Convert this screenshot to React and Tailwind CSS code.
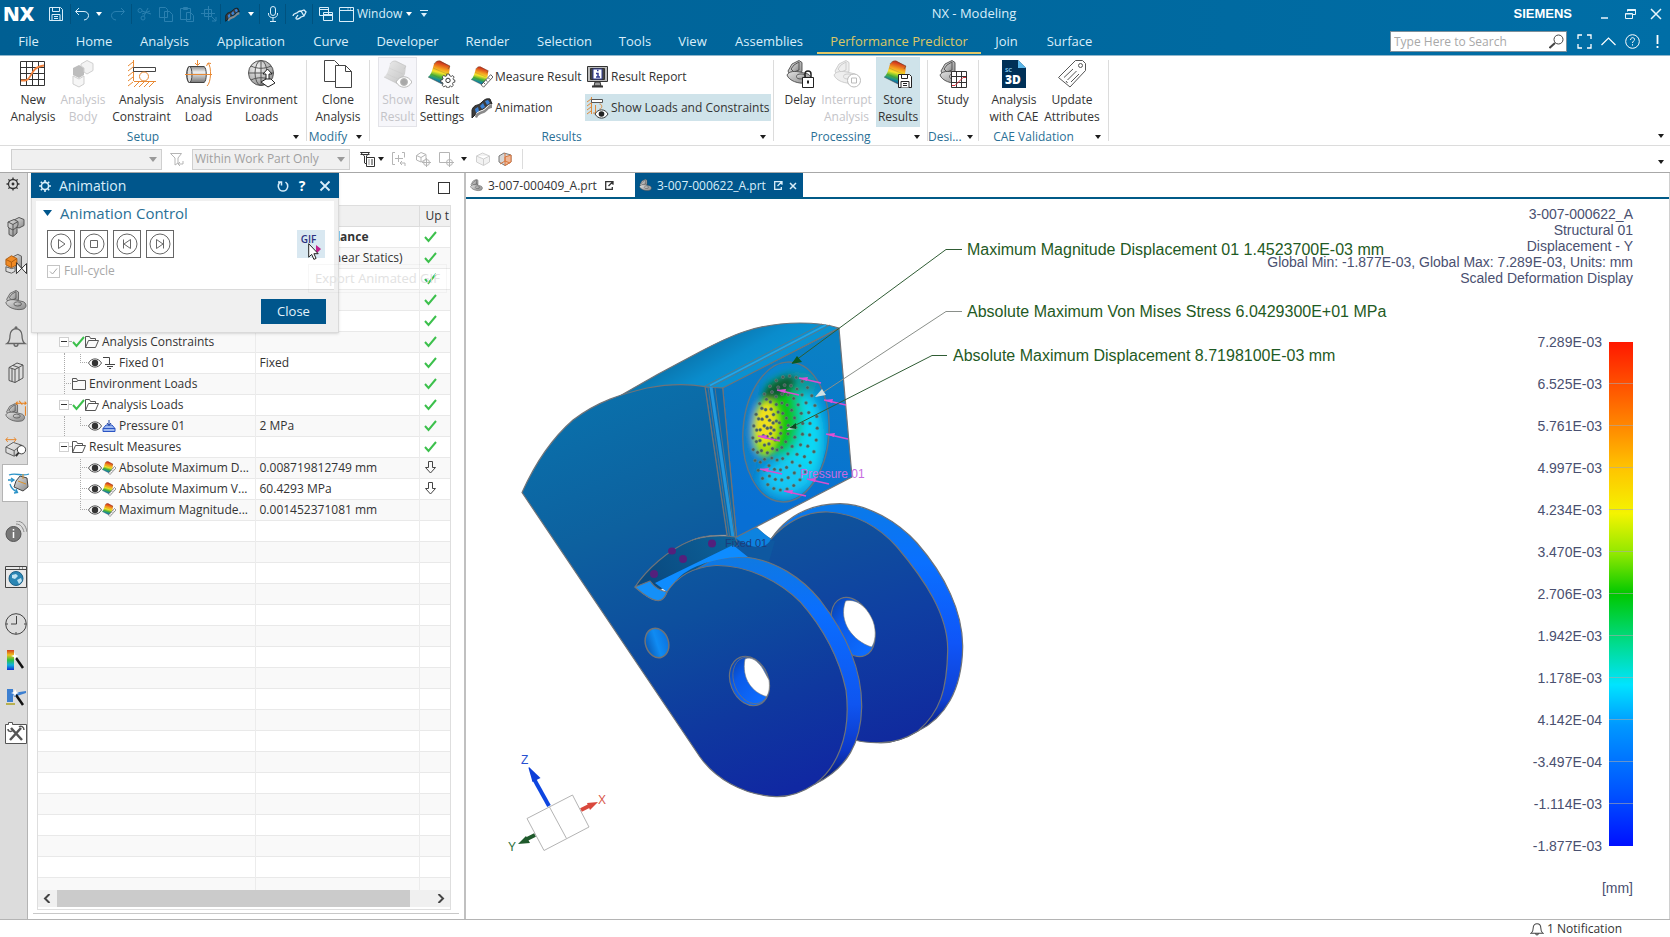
import React, { useState } from "react";
import clsx from "clsx";

const TABS = [
  { name: "File", width: "mr-[5px] w-[57px]" },
  { name: "Home", width: "w-[64px]" },
  { name: "Analysis", width: "w-[77px]" },
  { name: "Application", width: "w-[96px]" },
  { name: "Curve", width: "w-[64px]" },
  { name: "Developer", width: "w-[89px]" },
  { name: "Render", width: "w-[71px]" },
  { name: "Selection", width: "w-[83px]" },
  { name: "Tools", width: "w-[58px]" },
  { name: "View", width: "w-[57px]" },
  { name: "Assemblies", width: "w-[96px]" },
  { name: "Performance Predictor", width: "w-[164px]" },
  { name: "Join", width: "w-[51px]" },
  { name: "Surface", width: "w-[75px]" },
];

const LEGEND = [
  "7.289E-03",
  "6.525E-03",
  "5.761E-03",
  "4.997E-03",
  "4.234E-03",
  "3.470E-03",
  "2.706E-03",
  "1.942E-03",
  "1.178E-03",
  "4.142E-04",
  "-3.497E-04",
  "-1.114E-03",
  "-1.877E-03",
];

const ROWS = [
  { tail: "Balance", bold: true, state: "ok" },
  { tail: "(Linear Statics)", state: "ok" },
  { state: "ok" },
  { state: "ok" },
  { state: "ok" },
  { kind: "group", name: "Analysis Constraints", checked: true, state: "ok" },
  { kind: "leaf", name: "Fixed 01", icon: "fixed", value: "Fixed", trunk: true, last: true, state: "ok" },
  { kind: "empty", name: "Environment Loads", state: "ok" },
  { kind: "group", name: "Analysis Loads", checked: true, state: "ok" },
  { kind: "leaf", name: "Pressure 01", icon: "pressure", value: "2 MPa", trunk: true, last: true, state: "ok" },
  { kind: "group", name: "Result Measures", end: true, state: "ok" },
  { kind: "leaf", name: "Absolute Maximum D...", icon: "measure", value: "0.008719812749 mm", state: "down" },
  { kind: "leaf", name: "Absolute Maximum V...", icon: "measure", value: "60.4293 MPa", state: "down" },
  { kind: "leaf", name: "Maximum Magnitude...", icon: "measure", value: "0.001452371081 mm", last: true },
];

const FILLER_ROWS = 18;

/* ---------- shared paint ---------- */

const Defs = () => (
  <svg className="absolute h-0 w-0" aria-hidden="true">
    <defs>
      <linearGradient id="heat" x1="0.6" y1="0" x2="0.35" y2="1">
        <stop offset="0.1" stopColor="#d63a1c" />
        <stop offset="0.32" stopColor="#f39a1e" />
        <stop offset="0.5" stopColor="#f4e22a" />
        <stop offset="0.66" stopColor="#53b833" />
        <stop offset="0.82" stopColor="#158a9a" />
        <stop offset="1" stopColor="#1a3fb0" />
      </linearGradient>
      <linearGradient id="steel" x1="0" y1="0" x2="1" y2="1">
        <stop offset="0" stopColor="#e2e2e2" />
        <stop offset="1" stopColor="#8a8a8a" />
      </linearGradient>
      <linearGradient id="pale" x1="0" y1="0" x2="1" y2="1">
        <stop offset="0" stopColor="#ececec" />
        <stop offset="1" stopColor="#c4c4c4" />
      </linearGradient>
      <linearGradient id="drum" x1="0" y1="0" x2="0" y2="1">
        <stop offset="0" stopColor="#8a8a8a" />
        <stop offset="0.35" stopColor="#f0f0f0" />
        <stop offset="1" stopColor="#777777" />
      </linearGradient>
      <radialGradient id="ball" cx="0.35" cy="0.3" r="0.8">
        <stop offset="0" stopColor="#f6f6f6" />
        <stop offset="1" stopColor="#8c8c8c" />
      </radialGradient>
      <linearGradient id="rainbow" x1="0" y1="0" x2="0" y2="1">
        <stop offset="0" stopColor="#d2401c" />
        <stop offset="0.25" stopColor="#f0c020" />
        <stop offset="0.5" stopColor="#30c040" />
        <stop offset="0.75" stopColor="#10b0e0" />
        <stop offset="1" stopColor="#1030d0" />
      </linearGradient>
    </defs>
  </svg>
);

const Icon = ({ size = 28, box = 28, className, children, ...rest }) => (
  <svg
    width={size}
    height={size}
    viewBox={`0 0 ${box} ${box}`}
    fill="none"
    stroke="currentColor"
    strokeWidth="1"
    className={clsx("shrink-0", className)}
    aria-hidden="true"
    {...rest}
  >
    {children}
  </svg>
);

const Caret = ({ className = "text-[#1c1c1c]" }) => (
  <svg width="6" height="4" viewBox="0 0 6 4" fill="currentColor" className={clsx("shrink-0", className)} aria-hidden="true">
    <path d="M0 0h6L3 4z" />
  </svg>
);

const HeatBlock = ({ fill = "url(#heat)", edge = "#4a4a30" }) => (
  <>
    <path d="M6 4 9 1l3-.5L22 6l-1 8-4 7-3 3L0 17c3-2 4-6 6-13z" fill={fill} stroke="none" />
    <path d="M6 4c1-2 3-3 5-3L22 6l-2 3M0 17l14 7 3-3" stroke={edge} strokeWidth=".7" opacity=".7" />
    <path d="M5 8 19 14M3 14l13 6" stroke={edge} strokeWidth=".5" opacity=".4" />
  </>
);

const Bracket = ({ fill = "url(#steel)", edge = "#4c4c4c" }) => (
  <g stroke={edge} strokeWidth=".9" strokeLinejoin="round">
    <path d="M2 11 6 4l7-3.500 3 2v9L5 17z" fill={fill} />
    <path d="M5 9 8 5l5-3v8l-5 2z" fill={fill} />
    <path d="M1 15c2-4 8-4 13-3l8 2c5 3 3 9-3 9-6 1-16-2-18-8z" fill={fill} />
    <ellipse cx="15" cy="16.500" rx="4.500" ry="2.500" fill={fill} />
  </g>
);

const Floppy = () => (
  <g stroke="#222" fill="#fff">
    <path d="M14.500 14.500h11l2 2v11h-13z" />
    <path d="M17.500 14.500h6v4h-6zM17 27.500v-6h8v6" />
    <path d="M19 23.500h4M19 25.500h4" />
  </g>
);

/* ---------- ribbon icons ---------- */

const ribbonIcons = {
  newAnalysis: (
    <Icon className="text-[#333]">
      <path d="M1.500 1.500h24v24h-24zM7.500 1.500v24M13.500 1.500v24M19.500 1.500v24M1.500 7.500h24M1.500 13.500h24M1.500 19.500h24" />
      <path d="M2 20.500h4c7 0 5-14 19-15" stroke="#f0803c" strokeWidth="1.800" />
    </Icon>
  ),
  body: (
    <Icon className="text-[#cfcfcf]">
      <path d="M4 8 10 5l5 3v7l-5 3-6-3z" fill="#bdbdbd" stroke="none" />
      <path d="M12 4 18 .5l6 3v7L18 14l-3-2V8l-3-2z" fill="#f3f3f3" />
      <path d="M4 16v8l6 3 5-3v-8l-5 3z" fill="#f6f6f6" />
    </Icon>
  ),
  constraint: (
    <Icon className="text-[#e88a35]">
      <path d="M5.500 0v21M5 2 0 6M5 7l-5 4M5 12l-5 4M5 17l-5 4M5 22l-5 4" />
      <path d="M5.500 7.500h22v4h-22z" stroke="#444" fill="#fff" />
      <circle cx="16" cy="16.500" r="4.500" />
      <path d="M6 21.500h22M11 22l-5 5M16 22l-5 5M21 22l-5 5M26 22l-5 5" />
    </Icon>
  ),
  load: (
    <Icon className="text-[#e88a35]">
      <path d="M4 6.500h15c3 1 3 15 0 16H4c-3-1-3-15 0-16z" fill="url(#drum)" stroke="#444" />
      <ellipse cx="4.500" cy="14.500" rx="2.500" ry="8" fill="#ddd" stroke="#444" />
      <path d="M0 14.500h27M12.500 0v5M10 3l2.500 2.500L15 3M22 26c4-3 5-19 1-23M26 3.500 23 3l-1.500 3" />
    </Icon>
  ),
  environment: (
    <Icon className="text-[#555]">
      <circle cx="13" cy="13" r="12.500" fill="url(#ball)" />
      <ellipse cx="13" cy="13" rx="6" ry="12.500" />
      <path d="M.500 13h25M13 .500v25M3 6c6 3 14 3 20 0M3 20c6-3 14-3 20 0" />
      <path d="M18 19v-5h-3l4.500-5 4.500 5h-3v5M13 22l5-3h5l4 4-7 4z" fill="#fff" stroke="#222" />
    </Icon>
  ),
  clone: (
    <Icon className="text-[#444]">
      <path d="M.500.500h10l5 5v16H.500z" fill="#fff" />
      <path d="M11.500 5.500h10l6 6v16h-16z" fill="#fff" />
      <path d="M21.500 5.500v6h6" />
    </Icon>
  ),
  showResult: (
    <Icon className="text-[#b8b8b8]">
      <HeatBlock fill="url(#pale)" edge="#bbb" />
      <path d="M12 22c4-7 12-7 16 0-4 7-12 7-16 0z" fill="#fff" />
      <circle cx="20" cy="22" r="3.500" fill="#a8a8a8" />
    </Icon>
  ),
  resultSettings: (
    <Icon className="text-[#333]">
      <HeatBlock />
      <g transform="translate(20 20)">
        <path d="M-1.500-7h3l.5 2 1.800.8 1.800-1L7.200-3.500 6-1.500l.5 1.200 1.500.3v2.500l-2 .4-.7 1.600 1 1.800L4.500 8l-1.700-1-1.300.5-.5 2h-2l-.6-2L-3.200 7-5 8l-1.800-1.700 1-1.800-.7-1.600-2-.4V0l2-.4.700-1.400-1-1.900L-5-5.300l1.800 1 1.700-.7z" fill="#fff" transform="scale(.85)" />
        <circle r="2.200" cy=".4" />
      </g>
    </Icon>
  ),
  delay: (
    <Icon>
      <Bracket />
      <path d="M19 18v-4c0-4 6-4 6 0v4" stroke="#222" strokeWidth="1.500" />
      <path d="M16.500 17.500h11v10h-11z" stroke="#222" fill="#fff" />
      <path d="M22 20.500v3" stroke="#222" strokeWidth="2" />
    </Icon>
  ),
  interrupt: (
    <Icon>
      <Bracket fill="#eee" edge="#c9c9c9" />
      <circle cx="21" cy="20.500" r="6.500" fill="#fff" stroke="#bbb" />
      <path d="M18.500 18h5v5h-5z" stroke="#bbb" />
    </Icon>
  ),
  store: (
    <Icon>
      <HeatBlock />
      <Floppy />
    </Icon>
  ),
  study: (
    <Icon>
      <Bracket />
      <path d="M12.500 11.500h15v16h-15zM17.500 11.500v16M22.500 11.500v16M12.500 16.500h15M12.500 22.500h15" stroke="#333" fill="#fff" />
      <path d="M13 25.500h3l8-8h3" stroke="#d8303c" />
    </Icon>
  ),
  cae: (
    <Icon>
      <path d="M2 0h16l8 8v20H2z" fill="#003057" stroke="none" />
      <path d="M18 0v8h8z" fill="#59b5e8" stroke="none" />
      <text x="5" y="12" fontSize="6" fontWeight="700" fill="#7fc4ea" stroke="none">SC</text>
      <text x="5" y="24" fontSize="12" fontWeight="800" fill="#fff" stroke="none">3D</text>
    </Icon>
  ),
  tag: (
    <Icon className="text-[#555]">
      <path d="M.500 17.500 17.500.500h7l3 3v7L12 27z" fill="#fff" />
      <circle cx="22.500" cy="5.500" r="2" />
      <path d="M6 17.500 15 9M9.500 20 18.500 11M8 21l1.500 2M13 22l8-8" />
    </Icon>
  ),
};

const MeasureIcon = ({ size = 22 }) => (
  <Icon size={size} box={28}>
    <HeatBlock />
    <path d="m13 24 12-13 3 3-12 13z" fill="#fff" stroke="#333" />
    <path d="m16 21 2 2m1-5 2 2m1-5 2 2" stroke="#333" />
  </Icon>
);

const FilmIcon = ({ size = 22, edge = "#222" }) => (
  <Icon size={size} box={22}>
    <path d="M1 13C3 7 7 9 10 6s5-5 9-4l2 5c-4-1-5 3-9 5s-6 1-8 6l-3 3z" fill="#3c3c3c" stroke={edge} />
    <path d="m4 12 3-2 1 4-3 2zM9 9l3-3 2 4-3 2zM14 4l3-1 2 3-3 2z" fill="#3b82d6" stroke="none" />
    <path d="M4 20c1-5 5-5 9-7s4-6 8-5v3c-4 0-5 4-8 5s-6 2-7 5z" fill="#8a8a8a" stroke="none" />
  </Icon>
);

const ReportIcon = () => (
  <Icon size={22} box={22} className="text-[#333]">
    <path d="M.500.500h20v15h-20z" fill="#bdbdbd" />
    <path d="M3.500 2.500h14v11h-14z" fill="#444" />
    <path d="M6 3h9v10H6z" fill="#fff" stroke="#303a90" />
    <path d="M9 7.500h2V11m-2 0h4" stroke="#303a90" strokeWidth="1.500" />
    <path d="M10 4.500h1.500" stroke="#303a90" strokeWidth="1.500" />
    <path d="M8 16h5l1 4H7z" fill="#999" />
    <path d="M5 20.500h11" strokeWidth="2" />
  </Icon>
);

const LoadsEyeIcon = () => (
  <Icon size={22} box={22} className="text-[#e08a3a]">
    <path d="M4.500 0v17M4 2 0 5M4 6 0 9M4 10l-4 3M4 14l-4 3" />
    <path d="M4.500 2.500h11v3h-11z" stroke="#555" fill="#fff" />
    <path d="M8.500 8v8M12.500 7c3 0 3 5 0 5M6 16h5" />
    <path d="M8 17c3-5.500 10-5.500 13 0-3 5.500-10 5.500-13 0z" fill="#fff" stroke="#333" />
    <circle cx="14.500" cy="17" r="2.800" fill="#222" stroke="none" />
  </Icon>
);

/* ---------- title bar ---------- */

const QuickButton = ({ label, className, children }) => (
  <button type="button" aria-label={label} className={clsx("flex h-6 items-center justify-center", className)}>
    {children}
  </button>
);

const Divider = () => <span className="h-5 w-px bg-[#00527f]" />;

const QuickAccess = () => (
  <div className="flex h-[28px] items-center text-[#d9eefa]">
    <span className="w-[42px] pl-[3px] text-[20px] leading-7 font-extrabold text-white">NX</span>
    <QuickButton label="Save" className="w-[28px]">
      <Icon size={16} box={16}>
        <path d="M1.500 1.500h11l2 2v11h-13zM4.500 1.500v4h7v-4M4 14.500v-6h8v6M6 10.500h4M6 12.500h4" />
      </Icon>
    </QuickButton>
    <Divider />
    <QuickButton label="Undo" className="w-[22px]">
      <Icon size={16} box={16}>
        <path d="M5 2 1.500 5.500 5 9M2 5.500h8c6 0 6 8 0 8.500" />
      </Icon>
    </QuickButton>
    <QuickButton label="Undo list" className="w-[12px]">
      <Caret className="text-white" />
    </QuickButton>
    <QuickButton label="Redo" className="w-[26px] text-[#2a80b0]">
      <Icon size={16} box={16}>
        <path d="M11 2l3.500 3.500L11 9M14 5.500H6c-6 0-6 8 0 8.500" />
      </Icon>
    </QuickButton>
    <Divider />
    <QuickButton label="Cut" className="w-[24px] text-[#2a80b0]">
      <Icon size={14} box={14}>
        <circle cx="3" cy="3.500" r="2" />
        <circle cx="6" cy="11" r="2" />
        <path d="m5 4 9 3M7 9l4-8M13 4 5 7" />
      </Icon>
    </QuickButton>
    <QuickButton label="Copy" className="w-[20px] text-[#2a80b0]">
      <Icon size={16} box={16}>
        <path d="M1.500 1.500h6l2 2v8h-8zM6.500 5.500h5l3 3v7h-8z" />
      </Icon>
    </QuickButton>
    <QuickButton label="Paste" className="w-[22px] text-[#2a80b0]">
      <Icon size={16} box={16}>
        <path d="M1.500 2.500h10v11h-10zM4.500 1.500h4v2h-4zM7.500 6.500h4l3 3v6h-7z" />
      </Icon>
    </QuickButton>
    <QuickButton label="Move" className="w-[22px] text-[#2a80b0]">
      <Icon size={16} box={16}>
        <path d="M3.500 3.500h7v7h-7zM7.500 0v14M0 7.500h14M10 10l5 5m0-4v4h-4" />
      </Icon>
    </QuickButton>
    <Divider />
    <QuickButton label="Animate" className="w-[22px]">
      <FilmIcon size={15} edge="#111" />
    </QuickButton>
    <QuickButton label="Animate list" className="w-[16px]">
      <Caret className="text-white" />
    </QuickButton>
    <Divider />
    <QuickButton label="Voice" className="w-[25px]">
      <Icon size={16} box={16}>
        <rect x="5.500" y=".5" width="5" height="9" rx="2.500" />
        <path d="M3.500 7v1c0 5 9 5 9 0V7M8 12v3M5 15.500h6" />
      </Icon>
    </QuickButton>
    <Divider />
    <QuickButton label="Touch mode" className="w-[26px]">
      <Icon size={15} box={15} strokeWidth="1.300">
        <path d="M1 9c0-3 4-2 5-4 1-1 2-1 3-1l3-1 2 2-2 4-3 1c-2 2-5 3-5 1l2-3M9 4l3 5" />
      </Icon>
    </QuickButton>
    <Divider />
    <QuickButton label="Switch window" className="w-[26px]">
      <Icon size={16} box={16}>
        <path d="M1.500 1.500h9v8h-9zM1.500 3.500h9M5.500 6.500h9v8h-9z" />
        <path d="M5.500 9h9" strokeWidth="2" />
      </Icon>
    </QuickButton>
    <QuickButton label="Window" className="gap-[3px] text-[12px]">
      <Icon size={15} box={15}>
        <path d="M.500.500h14v14H.500zM.500 3.500h14M8.500 2h1M11 2h1" />
      </Icon>
      Window
      <Caret className="ml-px text-white" />
    </QuickButton>
    <QuickButton label="Customize" className="ml-[8px]">
      <svg width="8" height="8" viewBox="0 0 8 8" fill="currentColor" aria-hidden="true">
        <path d="M0 0h8v1H0zM1 3h6L4 7z" />
      </svg>
    </QuickButton>
  </div>
);

const TitleBar = ({ active, onSelect }) => (
  <header className="h-[56px] shrink-0 border-b border-[#8fb6cc] bg-linear-to-r from-[#005f93] to-[#006ea6] text-white">
    <div className="grid h-[28px] grid-cols-[1fr_auto_1fr] items-center pr-[8px]">
      <QuickAccess />
      <h1 className="ml-[286px] text-[13px] text-[#d9eefa]">NX - Modeling</h1>
      <div className="flex items-center justify-end text-[#e8f5fc]">
        <span className="mr-[26px] font-['Arimo','Liberation_Sans',sans-serif] text-[13px] font-bold text-white">SIEMENS</span>
        <button type="button" aria-label="Minimize" className="mr-[14px]">
          <Icon size={12} box={12} strokeWidth="1.500"><path d="M3 10h7" /></Icon>
        </button>
        <button type="button" aria-label="Restore" className="mr-[14px]">
          <Icon size={12} box={12}>
            <path d="M3.500 3.500v-2h8v5h-3" /><path d="M3.500 2h8" strokeWidth="2" />
            <path d="M1.500 5.500h7v5h-7zM1.500 6h7" />
          </Icon>
        </button>
        <button type="button" aria-label="Close window">
          <Icon size={12} box={12} strokeWidth="1.500"><path d="m1 1 10 10M11 1 1 11" /></Icon>
        </button>
      </div>
    </div>
    <div className="flex h-[27px] items-center">
      <nav className="flex h-full text-[13px] text-[#d9eefa]">
        {TABS.map((tab) => (
          <button
            key={tab.name}
            type="button"
            onClick={() => onSelect(tab.name)}
            className={clsx(
              "h-[26px] border-b-2 pt-[3px] whitespace-nowrap",
              tab.width,
              active === tab.name ? "border-[#e3c767] text-[#dcc766]" : "border-transparent"
            )}
          >
            {tab.name}
          </button>
        ))}
      </nav>
      <div className="ml-auto flex items-center pr-[5px]">
        <label className="mr-[10px] flex h-[21px] w-[177px] items-center border border-[#7d8f9a] bg-white pr-[2px] text-[#444]">
          <input
            type="search"
            aria-label="Search commands"
            placeholder="Type Here to Search"
            className="w-full min-w-0 bg-transparent px-[3px] text-[12px] text-[#333] outline-none placeholder:text-[#a8a8a8]"
          />
          <Icon size={15} box={15}>
            <circle cx="9.500" cy="5.500" r="4.500" />
            <path d="M6 9 .500 14" strokeWidth="2" />
          </Icon>
        </label>
        <button type="button" aria-label="Full screen" className="mr-[9px]">
          <Icon size={15} box={15} strokeWidth="1.300"><path d="M1 5V1h4M10 1h4v4M14 10v4h-4M5 14H1v-4" /></Icon>
        </button>
        <button type="button" aria-label="Collapse ribbon" className="mr-[9px]">
          <Icon size={15} box={15} strokeWidth="1.200"><path d="m.500 11 7-7 7 7" /></Icon>
        </button>
        <button type="button" aria-label="Help" className="mr-[10px]">
          <Icon size={15} box={15}>
            <circle cx="7.500" cy="7.500" r="6.800" />
            <path d="M5.500 6c0-3 4-3 4-.5 0 1.800-2 1.500-2 3.500M7.500 10.200v1.300" />
          </Icon>
        </button>
        <button type="button" aria-label="Alerts">
          <Icon size={15} box={15} strokeWidth="1.800"><path d="M7.500 1v9M7.500 12v2" /></Icon>
        </button>
      </div>
    </div>
  </header>
);

/* ---------- ribbon ---------- */

const BigButton = ({ icon, lines, width, disabled, pressed, outlined }) => (
  <button
    type="button"
    disabled={disabled}
    className={clsx(
      "flex h-[70px] shrink-0 flex-col items-center border pt-[2px] text-[12px] leading-[17px]",
      width,
      pressed ? "border-[#cde2ea] bg-[#cfe3ea]" : outlined ? "border-[#e3e3e8] bg-[#f6f6fa]" : "border-transparent",
      disabled ? "text-[#c4c4c8]" : "text-[#333]"
    )}
  >
    {ribbonIcons[icon]}
    <span className="mt-[3px] whitespace-nowrap">{lines[0]}</span>
    <span className="whitespace-nowrap">{lines[1]}</span>
  </button>
);

const SmallButton = ({ icon, label, pressed, className }) => (
  <button
    type="button"
    className={clsx(
      "flex h-[27px] items-center gap-[2px] text-[12px] whitespace-nowrap text-[#333]",
      pressed && "bg-[#cfe3ea]",
      className
    )}
  >
    {icon}
    {label}
  </button>
);

const RibbonGroup = ({ title, width, className, children }) => (
  <section className={clsx("my-1 flex shrink-0 flex-col border-r border-[#dcdcdc]", width)}>
    <div className={clsx("-mt-[3px] flex h-[70px]", className)}>{children}</div>
    <div className="mt-[1px] flex h-[18px] items-center text-[12px] text-[#2a7096]">
      <span className="flex-1 text-center whitespace-nowrap">{title}</span>
      <button type="button" aria-label={`${title} options`} className="flex w-[20px] justify-center">
        <Caret />
      </button>
    </div>
  </section>
);

const Ribbon = () => (
  <div className="flex h-[90px] shrink-0 border-b border-[#dcdcdc] bg-white">
    <RibbonGroup title="Setup" width="w-[307px]" className="pl-[8px]">
      <BigButton icon="newAnalysis" lines={["New", "Analysis"]} width="w-[50px]" />
      <BigButton icon="body" lines={["Analysis", "Body"]} width="w-[50px]" disabled />
      <BigButton icon="constraint" lines={["Analysis", "Constraint"]} width="w-[67px]" />
      <BigButton icon="load" lines={["Analysis", "Load"]} width="w-[47px]" />
      <BigButton icon="environment" lines={["Environment", "Loads"]} width="w-[79px]" />
    </RibbonGroup>
    <RibbonGroup title="Modify" width="w-[63px]" className="justify-center">
      <BigButton icon="clone" lines={["Clone", "Analysis"]} width="w-[50px]" />
    </RibbonGroup>
    <RibbonGroup title="Results" width="w-[404px]" className="pl-[8px]">
      <BigButton icon="showResult" lines={["Show", "Result"]} width="w-[39px]" disabled outlined />
      <BigButton icon="resultSettings" lines={["Result", "Settings"]} width="w-[50px]" />
      <div className="flex w-[118px] flex-col gap-[4px] pt-[6px] pl-[4px]">
        <SmallButton icon={<MeasureIcon />} label="Measure Result" />
        <SmallButton icon={<FilmIcon />} label="Animation" />
      </div>
      <div className="flex w-[186px] flex-col gap-[4px] pt-[6px]">
        <SmallButton icon={<ReportIcon />} label="Result Report" className="pl-[2px]" />
        <SmallButton icon={<LoadsEyeIcon />} label="Show Loads and Constraints" className="pl-[2px]" pressed />
      </div>
    </RibbonGroup>
    <RibbonGroup title="Processing" width="w-[154px]" className="pl-[3px]">
      <BigButton icon="delay" lines={["Delay", ""]} width="w-[46px]" />
      <BigButton icon="interrupt" lines={["Interrupt", "Analysis"]} width="w-[47px]" disabled />
      <span className="w-[6px]" />
      <BigButton icon="store" lines={["Store", "Results"]} width="w-[44px]" pressed />
    </RibbonGroup>
    <RibbonGroup title="Desi..." width="w-[51px]" className="justify-center">
      <BigButton icon="study" lines={["Study", ""]} width="w-[46px]" />
    </RibbonGroup>
    <RibbonGroup title="CAE Validation" width="w-[130px]" className="pl-[5px]">
      <BigButton icon="cae" lines={["Analysis", "with CAE"]} width="w-[60px]" />
      <BigButton icon="tag" lines={["Update", "Attributes"]} width="w-[56px]" />
    </RibbonGroup>
    <button type="button" aria-label="Ribbon options" className="mt-auto mr-[6px] mb-[7px] ml-auto">
      <Caret />
    </button>
  </div>
);

/* ---------- selection bar ---------- */

const FilterSelect = ({ label, options, className }) => (
  <div className={clsx("relative", className)}>
    <select
      aria-label={label}
      disabled
      className="block h-[21px] w-full appearance-none border border-[#cfcfcf] bg-[#f0f0f0] pl-[2px] text-[12px] text-[#a0a0a0] opacity-100"
    >
      {options.map((option) => (
        <option key={option}>{option}</option>
      ))}
    </select>
    <svg width="8" height="5" viewBox="0 0 8 5" className="absolute top-[8px] right-[5px] fill-[#9a9a9a]" aria-hidden="true">
      <path d="M0 0h8L4 5z" />
    </svg>
  </div>
);

const SelectionBar = () => (
  <div className="flex h-[27px] shrink-0 items-center border-b border-[#a8a8a8] bg-white pl-[11px] text-[#b5b5b5]">
    <FilterSelect label="Type filter" options={[""]} className="w-[151px]" />
    <Icon size={15} box={15} className="mr-[7px] ml-[8px]">
      <path d="M.500 1.500h11L8 6v5l-3 2V6zM10 10l-2 2 2 2M8 12h5V9" />
    </Icon>
    <FilterSelect label="Selection scope" options={["Within Work Part Only"]} className="w-[158px]" />
    <Icon size={15} box={15} className="mr-[3px] ml-[10px] text-[#333]">
      <path d="M.500.500h9L6.500 4v8l-2-1V4zM.500 2.500h9" />
      <path d="M6.500 5.500h8v9h-8zM8.500 8h1M11 8h2M8.500 10h1M11 10h2M8.500 12h1M11 12h2" fill="#fff" />
    </Icon>
    <Caret />
    <Icon size={15} box={15} className="ml-[8px]">
      <path d="M3 .500H.500v12H3M10 .500h2.500v5M3 6.500h8M6.500 3v7M10 9l-2 2 2 2M8 11h5v3" />
    </Icon>
    <Icon size={15} box={15} className="ml-[9px]">
      <path d="M.500 3.500 5 .500l5 2v5L5 10 .500 8zM.500 3.500l4.500 2 5-3M5 5.500V10" />
      <circle cx="10.500" cy="10.500" r="3" fill="#fff" />
      <path d="M10.500 6v9M6 10.500h9" />
    </Icon>
    <Icon size={15} box={15} className="ml-[8px]">
      <path d="M.500.500h10v10H.500z" />
      <circle cx="10.500" cy="10.500" r="3" fill="#fff" />
      <path d="M10.500 6v9M6 10.500h9" />
    </Icon>
    <span className="ml-[7px] flex"><Caret /></span>
    <Icon size={14} box={14} className="ml-[9px] text-[#d0d0d0]">
      <path d="m.500 4 6-3 7 3v6l-6 3.500-7-3.500zM.500 4l7 3 6-3M7.500 7v6.500" fill="#f2f2f2" />
    </Icon>
    <Icon size={14} box={14} className="ml-[8px] text-[#777]">
      <path d="m1 4 5-3 7 2v7l-6 3.500L1 10z" fill="#d6d6d6" />
      <path d="m7 5 6-2v7l-6 3.500z" fill="#efb897" stroke="#d9773f" />
      <path d="M7 1v8l-5 3M7 9l5 2" stroke="#d9773f" />
    </Icon>
    <span className="ml-[10px] h-5 w-px bg-[#dcdcdc]" />
    <button type="button" aria-label="Selection bar options" className="mt-[6px] mr-[6px] ml-auto flex">
      <Caret />
    </button>
  </div>
);

/* ---------- resource bar ---------- */

const RESOURCES = [
  {
    name: "Settings",
    height: "h-[22px]",
    icon: (
      <Icon size={14} box={14} className="text-[#333]" strokeWidth="1.300">
        <circle cx="7" cy="7" r="4.500" />
        <circle cx="7" cy="7" r=".8" fill="currentColor" />
        <path d="M7 .5v2M7 11.500v2M.500 7h2M11.500 7h2M2.400 2.400l1.400 1.400M10.200 10.200l1.400 1.400M2.400 11.600l1.400-1.400M10.200 3.800l1.400-1.400" />
      </Icon>
    ),
  },
  {
    name: "Assembly navigator",
    height: "mt-[14px] h-[36px]",
    icon: (
      <Icon size={22} box={22} className="text-[#555]">
        <path d="M9 4 14 1.500l5 2v6L14 12l-5-2z" fill="url(#steel)" />
        <path d="M3 6 9 3.500l4 2V9l-1 2v6l-4 3.500-4-2V12l-1-1z" fill="url(#steel)" />
        <path d="m3 6 5 2.500L13 5.500M4 12l4 2 4-3M8 8.500V20" />
      </Icon>
    ),
  },
  {
    name: "Constraint navigator",
    height: "h-[37px]",
    icon: (
      <Icon size={22} box={24} className="text-[#555]">
        <path d="m9 4 5-2.500 4 2V16l-5 3z" fill="url(#steel)" />
        <path d="m1 7 6-4 6 3v7l-6 3-6-3z" fill="#f08a24" stroke="#a85a10" />
        <path d="m1 7 6 3 6-4M7 10v6" stroke="#a85a10" />
        <path d="m1 15 6 2 4-1v4l-4 2-6-2z" fill="#ddd" />
        <path d="M12.500 10.500v12l11-11v11z" fill="#fff" stroke="#222" />
      </Icon>
    ),
  },
  {
    name: "Part navigator",
    height: "h-[37px]",
    icon: <Icon size={22} box={26}><Bracket /></Icon>,
  },
  {
    name: "Notifications",
    height: "h-[36px]",
    icon: (
      <Icon size={22} box={22} className="text-[#666]" strokeWidth="1.300">
        <path d="M2 17.500c3-2 3-5 3-8 0-9 12-9 12 0 0 3 0 6 3 8zM9 18c0 3 4 3 4 0M10 2.500c0-2 2-2 2 0" />
      </Icon>
    ),
  },
  {
    name: "Reuse library",
    height: "h-[36px]",
    icon: (
      <Icon size={22} box={22} className="text-[#555]">
        <path d="M4 5.500 12 1l6 2v13l-8 4.500-6-2z" fill="#ddd" />
        <path d="m4 5.500 6 2L18 3M10 7.500v13M7 6.500v13M8 3.500l6 2v13" />
      </Icon>
    ),
  },
  {
    name: "PMI navigator",
    height: "h-[39px]",
    icon: (
      <Icon size={22} box={28} className="text-[#e8801c]" strokeWidth="1.300">
        <g transform="translate(0 4)"><Bracket /></g>
        <path d="M14 4h13M16 2l-2 2 2 2M25 2l2 2-2 2M26 8v12M18 1l4 5" />
      </Icon>
    ),
  },
  {
    name: "Inspection",
    height: "h-[34px]",
    icon: (
      <Icon size={22} box={24} className="text-[#555]">
        <path d="m1 12 8-5 9 3v6l-8 6-9-4z" fill="url(#pale)" />
        <path d="m1 12 9 4 8-6M10 16v6" />
        <circle cx="18" cy="15" r="4.500" fill="#fff" stroke="#333" />
        <path d="m15 18-3 4" stroke="#333" strokeWidth="2" />
        <path d="M1 4h11M3 1.500 1 4l2 2.500M10 1.500 12 4l-2 2.500" stroke="#e8801c" />
      </Icon>
    ),
  },
  {
    name: "Performance predictor",
    height: "h-[38px]",
    icon: (
      <Icon size={22} box={22} className="text-[#2b93c8]">
        <path d="M1 3c7-3 12 2 20-1M0 8h5M3 6l3 2-3 2M2 12c1 4 3 6 7 8M8 17l1.500 3.500L6 21" strokeWidth="1.300" />
        <path d="M8 9 12 4l7 2 1 9-5 4-9-4z" fill="url(#steel)" stroke="#444" />
        <path d="m10 9 8 3M15 2v5" stroke="#d8902c" />
      </Icon>
    ),
  },
  {
    name: "Information",
    height: "h-[60px]",
    icon: (
      <Icon size={22} box={22} className="text-[#888]">
        <circle cx="8.500" cy="13" r="7.500" fill="#777" stroke="#555" />
        <path d="M8.500 11v6M8.500 8v1.500" stroke="#fff" strokeWidth="1.500" />
        <path d="M11 3c5 0 7 4 8 8M11 0c7 0 10 5 11 11" />
      </Icon>
    ),
  },
  {
    name: "Web browser",
    height: "h-[30px]",
    icon: (
      <Icon size={22} box={22} className="text-[#444]">
        <path d="M.500.500h21v21H.500z" fill="#e8e8e8" />
        <path d="M.500 3.500h21M14 2h1M17 2h1" />
        <circle cx="11" cy="12.500" r="7" fill="#2a86b4" stroke="#1b6189" />
        <path d="M7 9l4-1 2 2-3 3-3-1zM12 14l4-2 1 3-3 3zM8 16l2 1" fill="#bfe3f2" stroke="none" />
      </Icon>
    ),
  },
  {
    name: "History",
    height: "mt-[14px] h-[36px]",
    icon: (
      <Icon size={22} box={22} className="text-[#444]">
        <circle cx="11" cy="11" r="10.300" />
        <path d="M11.500 3v8H6M11 19v2M19 11h2M1 11h2" />
      </Icon>
    ),
  },
  {
    name: "System materials",
    height: "h-[36px]",
    icon: (
      <Icon size={22} box={22}>
        <path d="M2 1h7v20H2z" fill="url(#rainbow)" stroke="none" />
        <path d="m11 9 7 10" stroke="#111" strokeWidth="2.500" />
        <path d="M9 3l1.500 3L14 7l-3 1-1 3-1-3-3-1 3-1z" fill="#fff" stroke="none" />
      </Icon>
    ),
  },
  {
    name: "Process studio",
    height: "h-[38px]",
    icon: (
      <Icon size={22} box={22}>
        <path d="M2 3h6v13H2zM8 7l13-2v2l-12 4z" fill="#3c7fd0" stroke="none" />
        <path d="M1 17h9v2H1z" fill="#b8b050" stroke="none" />
        <path d="m11 9 7 10" stroke="#111" strokeWidth="2.500" />
        <path d="M10 3l1.500 3L14 7l-3 1-1 3-1-3-3-1 3-1z" fill="#fff" stroke="none" />
      </Icon>
    ),
  },
  {
    name: "Tools",
    height: "h-[34px]",
    icon: (
      <Icon size={22} box={22} className="text-[#555]">
        <path d="M.500 2.500h3v-2h4v2h14v19H.500z" fill="#fff" />
        <path d="M6 6l11 12M16 6 5 18" strokeWidth="2.500" />
        <path d="M3 7c0 3 4 3 5 1M14 5c2-2 5 0 5 3" strokeWidth="1.500" />
      </Icon>
    ),
  },
];

const ResourceBar = () => (
  <nav className="flex w-[28px] shrink-0 flex-col border-r border-[#b4b4b4] bg-[#dcdcdc]">
    {RESOURCES.map(({ name, height, icon }) => (
      <button
        key={name}
        type="button"
        aria-label={name}
        className={clsx(
          "flex shrink-0 items-center",
          height,
          name === "Settings" ? "pl-[6px]" : "pl-[5px]",
          name === "Performance predictor" && "-mr-px ml-[2px] border border-r-0 border-[#b4b4b4] bg-white pl-[2px]"
        )}
      >
        {icon}
      </button>
    ))}
  </nav>
);

/* ---------- navigator tree ---------- */

const Check = () => (
  <Icon size={13} box={13} className="text-[#3cc04c]" strokeWidth="2">
    <path d="m1 7 3.500 4L12 2" />
  </Icon>
);

const Folder = () => (
  <Icon size={14} box={14} className="text-[#555]">
    <path d="M.500 12.500v-11h4l1 2h5v2M.500 12.500l3-7h10l-3 7z" />
  </Icon>
);

const ClosedFolder = () => (
  <Icon size={14} box={14} className="text-[#555]">
    <path d="M.500 12.500v-11h4l1 2h8v9zM.500 4.500h5" />
  </Icon>
);

const Eye = () => (
  <Icon size={14} box={14} className="text-[#555]">
    <path d="M.500 7c3-5.500 10-5.500 13 0-3 5.500-10 5.500-13 0z" />
    <circle cx="7" cy="7" r="3.200" fill="#333" stroke="none" />
  </Icon>
);

const leafIcons = {
  fixed: (
    <Icon size={14} box={14} className="text-[#444]">
      <path d="M1 1.500h6.500V8M3 8.500h10M5 10.500h6M7 12.500h2" />
    </Icon>
  ),
  pressure: (
    <Icon size={14} box={14} className="text-[#2b55c4]">
      <path d="M1 9.500 4 6h6l3 3.500v3H1z" fill="#9db8ee" />
      <path d="M1 9.500h12" />
      <path d="M7 1v5M5 4l2 2.500L9 4" stroke="#1b3f9c" />
    </Icon>
  ),
  measure: <MeasureIcon size={14} />,
};

// dotted connector in front of a row
const Elbow = ({ width = 9, last }) => (
  <svg width={width} height="21" className="shrink-0" aria-hidden="true">
    <path d={last ? "M.5 0V10.500" : "M.5 0V21"} stroke="#aaa" strokeDasharray="1 1" fill="none" />
    <path d={`M0 10.500H${width}`} stroke="#aaa" strokeDasharray="1 1" fill="none" />
  </svg>
);

const TreeCell = ({ row }) => {
  if (!row.name) return null;
  if (row.kind === "leaf") {
    return (
      <div className="flex h-[20px] items-center overflow-hidden pl-[26px]">
        <span className={clsx("h-full w-[16px] shrink-0", row.trunk && "border-l border-dotted border-[#aaa]")} />
        <Elbow width={8} last={row.last} />
        <Eye />
        {leafIcons[row.icon]}
        <span className="ml-[3px] whitespace-nowrap">{row.name}</span>
      </div>
    );
  }
  return (
    <div className="flex h-[20px] items-center overflow-hidden pl-[21px]">
      {row.kind === "group" ? (
        <>
          <button
            type="button"
            aria-label={`Collapse ${row.name}`}
            className="flex size-[10px] items-center justify-center border border-[#d0d0d0] bg-white"
          >
            <span className="h-px w-[6px] bg-[#333]" />
          </button>
          <span className="mr-px w-[2px] border-t border-dotted border-[#aaa]" />
        </>
      ) : (
        <span className="flex pl-[5px]">
          <Elbow width={8} />
        </span>
      )}
      {row.checked && <Check />}
      {row.kind === "empty" ? <ClosedFolder /> : <Folder />}
      <span className="ml-[3px] whitespace-nowrap">{row.name}</span>
    </div>
  );
};

const Navigator = () => (
  <div className="flex min-h-0 flex-1 flex-col pt-[4px]">
    <div className="flex h-[28px] justify-end pt-[5px] pr-[14px]">
      <button type="button" aria-label="Maximize panel" className="size-[12px] border border-[#333]" />
    </div>
    <div className="mr-[13px] mb-[3px] ml-[9px] flex min-h-0 flex-1 flex-col overflow-hidden border border-[#dedede]">
      <div className="min-h-0 flex-1 overflow-hidden">
        <table className="w-full table-fixed border-collapse text-[12px] text-[#333]">
          <colgroup>
            <col />
            <col className="w-[164px]" />
            <col className="w-[31px]" />
          </colgroup>
          <thead>
            <tr className="h-[20px] border-b border-[#dcdcdc] bg-[#f0f0f0]">
              <th scope="col" aria-label="Name" className="border-r border-[#dcdcdc]" />
              <th scope="col" aria-label="Value" className="border-r border-[#dcdcdc]" />
              <th scope="col" className="overflow-hidden p-0 pl-[6px] text-left font-normal whitespace-nowrap">Up t</th>
            </tr>
          </thead>
          <tbody>
            {ROWS.map((row, i) => (
              <tr key={i} className="h-[21px] border-b border-[#e9e9e9] even:bg-[#f9f9f9]">
                <td className="border-r border-[#ececec] p-0">
                  <TreeCell row={row} />
                </td>
                <td className="border-r border-[#ececec] p-0 pl-[4px] whitespace-nowrap">
                  {row.tail ? (
                    <div className={clsx("text-right", row.bold ? "w-[109px] font-bold" : "w-[143px]")}>{row.tail}</div>
                  ) : (
                    row.value
                  )}
                </td>
                <td className="p-0 pl-[4px]">
                  {row.state === "ok" && <Check />}
                  {row.state === "down" && (
                    <Icon size={13} box={13} className="text-[#444]">
                      <path d="M4.500.500h4v6h3L6.500 12l-5-5.500h3z" />
                    </Icon>
                  )}
                </td>
              </tr>
            ))}
            {Array.from({ length: FILLER_ROWS }, (_, i) => (
              <tr key={`filler-${i}`} className="h-[21px] border-b border-[#e9e9e9] even:bg-[#f9f9f9]">
                <td className="border-r border-[#ececec]" />
                <td className="border-r border-[#ececec]" />
                <td />
              </tr>
            ))}
          </tbody>
        </table>
      </div>
      <div className="mb-[2px] flex h-[17px] shrink-0 items-center bg-[#f0f0f0] text-[#444]">
        <button type="button" aria-label="Scroll left" className="flex w-[19px] justify-center">
          <Icon size={9} box={9} strokeWidth="2"><path d="M6.500 0 2 4.500 6.500 9" /></Icon>
        </button>
        <span className="h-full flex-1 bg-[#cbcbcb]" />
        <button type="button" aria-label="Scroll right" className="ml-[21px] flex w-[19px] justify-center">
          <Icon size={9} box={9} strokeWidth="2"><path d="M2.500 0 7 4.500 2.500 9" /></Icon>
        </button>
      </div>
    </div>
    <div className="mx-[5px] mb-[5px] border-t border-[#c8c8c8]" />
  </div>
);

/* ---------- animation dialog ---------- */

const PLAYBACK = [
  { name: "Play", path: "M8.500 6.500 15 11l-6.500 4.500z" },
  { name: "Stop", path: "M7.500 7.500h7v7h-7z" },
  { name: "Previous", path: "M7.500 6.500v9M14.500 6.500 8 11l6.500 4.500z" },
  { name: "Next", path: "M14.500 6.500v9M7.500 6.500 14 11l-6.500 4.500z" },
];

const AnimationDialog = ({ onClose }) => {
  const [fullCycle] = useState(true);

  return (
    <div
      role="dialog"
      aria-label="Animation"
      className="absolute top-0 left-[31px] z-10 flex h-[160px] w-[308px] flex-col border border-[#dadada] bg-[#f0f0f0] shadow-sm"
    >
      <div className="-mx-px -mt-px flex h-[25px] shrink-0 items-center bg-[#00568c] px-[8px] text-[14px] text-[#d9eefa]">
        <Icon size={12} box={12} strokeWidth="1.600">
          <circle cx="6" cy="6" r="3.600" />
          <path d="M6 0v2M6 10v2M0 6h2M10 6h2M1.800 1.800l1.400 1.400M8.800 8.800l1.400 1.400M1.800 10.200l1.400-1.400M8.800 3.200l1.400-1.400" />
        </Icon>
        <h2 className="ml-[8px]">Animation</h2>
        <button type="button" aria-label="Reset" className="ml-auto">
          <Icon size={12} box={12} strokeWidth="1.500"><path d="M3.500 2c-4 3-2 9 2.500 9s6.500-6 2.500-9M4.500 5.500V2H1" /></Icon>
        </button>
        <button type="button" aria-label="Dialog help" className="ml-[9px] w-[8px] font-bold text-white">?</button>
        <button type="button" aria-label="Close dialog" className="ml-[13px]" onClick={onClose}>
          <Icon size={12} box={12} strokeWidth="1.800"><path d="m1.500 1.500 9 9M10.500 1.500l-9 9" /></Icon>
        </button>
      </div>
      <div className="mx-[4px] mt-[3px] h-[89px] border-b border-[#dadada] bg-white pr-[9px] pl-[11px] pt-[2px]">
        <h3 className="-ml-[4px] flex h-[20px] items-center text-[15px] text-[#2a7096]">
          <svg width="9" height="6" viewBox="0 0 9 6" className="fill-[#00568c]" aria-hidden="true"><path d="M0 0h9L4.500 6z" /></svg>
          <span className="ml-[8px]">Animation Control</span>
        </h3>
        <div className="mt-[7px] flex gap-[5px]">
          {PLAYBACK.map(({ name, path }) => (
            <button key={name} type="button" aria-label={name} className="flex size-[28px] items-center justify-center border border-[#666]">
              <Icon size={22} box={22} className="text-[#666]">
                <circle cx="11" cy="11" r="10" />
                <path d={path} />
              </Icon>
            </button>
          ))}
          <button type="button" aria-label="Export Animated GIF" className="relative ml-auto flex size-[28px] justify-center bg-[#d9e8f1] text-[10px] font-semibold text-[#2c3080]">
            <span className="pt-[2px] pr-[5px] leading-[14px]">GIF</span>
            <svg width="16" height="20" viewBox="0 0 16 20" className="absolute top-[13px] left-[11px]" aria-hidden="true">
              <path d="m8 2 5 4-5 5z" fill="#c0208c" />
              <path d="M.7.7v13.500l3-2.800 2.200 5 2.200-1-2.200-4.700h4.300z" fill="#fff" stroke="#222" />
            </svg>
          </button>
        </div>
        <label className="mt-[4px] flex items-center text-[12px] text-[#a8a8a8]">
          <span className="relative flex">
            <input type="checkbox" checked={fullCycle} disabled readOnly className="size-[13px] appearance-none border border-[#c4c4c4] bg-white" />
            <Icon size={13} box={13} className="absolute top-0 left-0"><path d="m3 6.500 2.500 2.500L10 3.500" /></Icon>
          </span>
          <span className="ml-[4px]">Full-cycle</span>
        </label>
      </div>
      <button type="button" onClick={onClose} className="mt-[9px] mr-[12px] h-[25px] w-[65px] self-end bg-[#00568c] text-[13px] text-[#e4f2fa]">
        Close
      </button>
      <span role="tooltip" className="absolute top-[90px] left-[276px] h-[29px] border border-[#00000008] px-[6px] text-[13px] leading-[26px] whitespace-nowrap text-[#e2e2e2]">
        Export Animated GIF
      </span>
    </div>
  );
};

/* ---------- graphics window ---------- */

// pressure samples spread over the dimple, crowded towards its far wall
const SAMPLES = [0, 1, 2, 3, 4, 5, 6].flatMap((ring) => {
  const t = ring / 6;
  const count = ring === 0 ? 1 : 6 + ring * 4;
  return Array.from({ length: count }, (_, i) => {
    const a = (i / count) * Math.PI * 2 + ring * 0.3;
    return {
      x: 774 + 11 * t + 32 * t * Math.cos(a) + 4 * t * -Math.sin(a),
      y: 430 + 3 * t + 57 * t * Math.sin(a),
    };
  });
});

const ARROWS = [
  [799, 378],
  [777, 390],
  [824, 400],
  [826, 434],
  [758, 436],
  [760, 469],
  [807, 479],
  [784, 491],
];

const BODY =
  "M522 492.500C533 468 550 440 573 420C598 401 622 394 647 388C668 384 690 384 705 386.700L727 535C712 535 700 536 690 541C668 550 646 570 635 587C641 592 650 600 657 600.500C662 600 665 598 667 592C676 578 692 567 716 565.500C748 565 780 582 800 601.700C825 630 840 662 846 690C849 715 846 735 840 750C835 763 826 776 815 784C803 792 790 797 776 796.700C742 795 715 778 700 757Z";

const Model = () => (
  <svg width="940" height="720" viewBox="466 199 940 720" className="absolute top-0 left-0 text-[16px]" role="img" aria-label="Displacement result on part 3-007-000622_A">
    <defs>
      <linearGradient id="bodyFill" gradientUnits="userSpaceOnUse" x1="610" y1="390" x2="760" y2="800">
        <stop offset="0" stopColor="#0a70ab" />
        <stop offset="0.3" stopColor="#0d619f" />
        <stop offset="0.55" stopColor="#0d4f9e" />
        <stop offset="0.8" stopColor="#0f389f" />
        <stop offset="1" stopColor="#1028a2" />
      </linearGradient>
      <linearGradient id="rearFill" gradientUnits="userSpaceOnUse" x1="820" y1="510" x2="890" y2="742">
        <stop offset="0" stopColor="#0f559c" />
        <stop offset="0.5" stopColor="#0f3fa2" />
        <stop offset="1" stopColor="#102a9e" />
      </linearGradient>
      <linearGradient id="rim" gradientUnits="userSpaceOnUse" x1="0" y1="555" x2="0" y2="785">
        <stop offset="0" stopColor="#0f7ae0" />
        <stop offset="0.25" stopColor="#0a6eff" />
        <stop offset="0.65" stopColor="#0f55f0" />
        <stop offset="0.85" stopColor="#0c38c8" />
        <stop offset="1" stopColor="#08186a" />
      </linearGradient>
      <linearGradient id="rearRim" gradientUnits="userSpaceOnUse" x1="0" y1="505" x2="0" y2="735">
        <stop offset="0" stopColor="#0a7ae8" />
        <stop offset="0.25" stopColor="#0a70ff" />
        <stop offset="0.6" stopColor="#0f55f8" />
        <stop offset="0.85" stopColor="#0f40d0" />
        <stop offset="1" stopColor="#08186a" />
      </linearGradient>
      <linearGradient id="topFill" gradientUnits="userSpaceOnUse" x1="690" y1="350" x2="715" y2="392">
        <stop offset="0" stopColor="#0a74ac" />
        <stop offset="0.6" stopColor="#0a8ccc" />
        <stop offset="1" stopColor="#0a92d2" />
      </linearGradient>
      <linearGradient id="faceFill" gradientUnits="userSpaceOnUse" x1="800" y1="340" x2="770" y2="520">
        <stop offset="0" stopColor="#0a80c4" />
        <stop offset="1" stopColor="#086fd4" />
      </linearGradient>
      <linearGradient id="pocket" gradientUnits="userSpaceOnUse" x1="650" y1="580" x2="720" y2="535">
        <stop offset="0" stopColor="#0a4a80" />
        <stop offset="1" stopColor="#0c5f96" />
      </linearGradient>
      <linearGradient id="bore" x1="0" y1="0" x2="0.4" y2="1">
        <stop offset="0" stopColor="#0a3c9c" />
        <stop offset="0.4" stopColor="#0a5ae8" />
        <stop offset="1" stopColor="#0d6cff" />
      </linearGradient>
      <linearGradient id="pin" x1="0" y1="0" x2="1" y2="0">
        <stop offset="0" stopColor="#0a5cb8" />
        <stop offset="0.5" stopColor="#0f8cf4" />
        <stop offset="1" stopColor="#0c74e0" />
      </linearGradient>
      <clipPath id="dimple">
        <ellipse cx="786" cy="432" rx="42" ry="69" transform="rotate(4 786 432)" />
      </clipPath>
      <filter id="soft" x="-50%" y="-50%" width="200%" height="200%">
        <feGaussianBlur stdDeviation="6" />
      </filter>
      <filter id="softer" x="-50%" y="-50%" width="200%" height="200%">
        <feGaussianBlur stdDeviation="3" />
      </filter>
    </defs>

    <g stroke="#6f7378" strokeWidth="1.200" strokeLinejoin="round">
      {/* rear lug */}
      <path
        d="M736 537C745 530 752 526 757 528C762 533 766 537 771 539C784 520 806 504 840 503.700C868 504 898 522 917 543C945 575 963 612 962.700 647C962 690 945 718 918 731C905 739 893 743 880 742.700L855 740L830 690L750 560Z"
        fill="url(#rearRim)"
      />
      <path
        d="M771 539C784 524 805 511 828 512C858 514 880 528 897 547C925 580 948 615 947.700 650C947 690 940 712 918 731C905 739 893 743 880 742.700C870 743 862 742 855 740L840 640L750 560L745 545Z"
        fill="url(#rearFill)"
      />
      <path d="M700 540L736 534L775 541L765 575L740 580L690 580Z" fill="#0e58a0" stroke="none" />
      <path d="M734 537L757 528L771 539C768 545 764 547 757 547C748 546 741 542 734 537Z" fill="#0d83e0" stroke="none" />
      <ellipse cx="853" cy="627" rx="20" ry="31" transform="rotate(-23 853 627)" fill="url(#bore)" />
      <path d="M845.500 601C858 598 868 609 873 621C877 632 875 643 871.500 647C853 641 838 622 845.500 601Z" fill="#fff" strokeWidth=".6" />

      {/* block */}
      <path d="M618 397C645 381 680 362 700 351.700C730 336 756 323 800 323C815 323 826 324 839 328L722 389L705 387C680 384 650 386 618 397Z" fill="url(#topFill)" />
      <path d="M839 328.500L852 477L736.500 537L722.700 388Z" fill="url(#faceFill)" />
      <path d="M705 387L722.700 388L736.500 537L727 536Z" fill="#0a6aad" />
      <path d="M711 387L733 537" stroke="#2196dd" strokeWidth="3" />
      <path d="M708 387L729.500 536M715 388L735 537M705 386L822 324M711 387L830 325" strokeWidth=".8" />
      <path d="M710 385.500L826 325" stroke="#27a5e6" strokeWidth="1.500" />

      {/* front lug */}
      <path
        d="M685 573C700 562 722 556 745 557C775 560 802 578 820 600C848 636 862 672 861.700 707C861 742 848 768 815 784L780 700Z"
        fill="url(#rim)"
      />
      <path d="M635 587C645 570 668 548 690 541C703 536 720 535 735 537L738 545L660 590Z" fill="url(#pocket)" strokeWidth=".8" />
      <path d="M655 583L733 545L748 557C720 556 695 565 683 574C675 581 670 587 667 592Z" fill="#0e8cff" stroke="none" />
      <path d={BODY} fill="url(#bodyFill)" />
      <path d="M635 587L650 581C655 588 660 591 667 592C664 600 660 601 657 600.500C648 599 641 592 635 587Z" fill="#1590f8" />

      <ellipse cx="657" cy="643" rx="11.500" ry="15" transform="rotate(-18 657 643)" fill="url(#pin)" strokeWidth="1.500" />
      <ellipse cx="749.500" cy="681" rx="19" ry="25.500" transform="rotate(-22 749.500 681)" fill="url(#bore)" />
      <ellipse cx="751" cy="680.500" rx="17" ry="24" transform="rotate(-22 751 680.500)" strokeWidth=".7" fill="none" />
      <path d="M745 659C751 656 758 661 763 669L769 680C770 688 769 693 766.500 696.500C753 693 741 679 745 659Z" fill="#fff" strokeWidth=".6" />
    </g>

    <g fill="#54207c">
      <ellipse cx="654" cy="574" rx="4" ry="4" />
      <ellipse cx="672" cy="551" rx="4" ry="3.500" />
      <ellipse cx="683" cy="559" rx="4" ry="4" />
      <ellipse cx="712" cy="543.500" rx="4" ry="4" />
    </g>

    <g clipPath="url(#dimple)">
      <rect x="735" y="355" width="105" height="155" fill="#0a84d0" />
      <g filter="url(#soft)">
        <ellipse cx="801" cy="440" rx="23" ry="50" fill="#10d8f4" />
        <ellipse cx="786" cy="478" rx="24" ry="18" fill="#14c8f4" />
        <ellipse cx="797" cy="384" rx="20" ry="12" fill="#0a9a98" />
        <ellipse cx="781" cy="418" rx="20" ry="38" fill="#10c414" />
      </g>
      <g filter="url(#softer)">
        <ellipse cx="779" cy="388" rx="18" ry="8" fill="#0a5c34" transform="rotate(-32 779 388)" />
        <ellipse cx="767" cy="428" rx="14" ry="29" fill="#a4dc10" transform="rotate(6 767 428)" />
        <ellipse cx="765" cy="423" rx="10" ry="21" fill="#f0e01c" />
        <path d="M738 375L762 387C750 402 748 440 757 464L750 485L735 460Z" fill="#0a7fca" />
      </g>
      {SAMPLES.map(({ x, y }, i) => (
        <circle key={i} cx={x} cy={y} r="1.600" fill="#47605c" stroke="#7c9088" strokeWidth=".4" />
      ))}
    </g>
    <ellipse cx="786" cy="432" rx="43" ry="70" transform="rotate(4 786 432)" fill="none" stroke="#5f7684" strokeWidth="1.500" />

    <g stroke="#d94fd0" fill="#e050d4" strokeWidth="1.500">
      {ARROWS.map(([x, y]) => (
        <g key={`${x}-${y}`}>
          <path d={`M${x} ${y}l22 5`} />
          <path d={`M${x} ${y}l9-1-1 4z`} stroke="none" />
        </g>
      ))}
    </g>
    <text x="800" y="478" fontSize="12" fill="#c66be0">Pressure 01</text>
    <text x="725" y="547" fontSize="11" fill="#1c3c7c">Fixed 01</text>

    <g fill="none" stroke="#8a8f8a" strokeWidth="1">
      <path d="M962 249.500H946L792 363" stroke="#2f5c34" />
      <path d="M962 311.500H946L816 397" />
      <path d="M947 355.500H932L786 430" stroke="#2f5c34" />
    </g>
    <path d="M791.500 364 797 356l5 6z" fill="#0a5a20" />
    <path d="M815 397l7-8 4 6z" fill="#cfe0e4" />
    <path d="M786 430l7-5 3 4z" fill="#cfe0e4" />
    <path d="M789 428l7-5 0 6z" fill="#0a4a20" />
    <g fill="#1f5a24">
      <text x="967" y="255">Maximum Magnitude Displacement 01 1.4523700E-03 mm</text>
      <text x="967" y="317">Absolute Maximum Von Mises Stress 6.0429300E+01 MPa</text>
      <text x="953" y="361">Absolute Maximum Displacement 8.7198100E-03 mm</text>
    </g>

    {/* view triad */}
    <path d="M527 818.500 572.500 795 589 827 544 850.500zM549.500 807 566.500 838.500" fill="#fff" stroke="#b4b4b4" />
    <path d="M549 806 534 779" stroke="#0d45e0" strokeWidth="4" />
    <path d="M529 767l-.500 1 4 14 8-4z" fill="#0d3fd8" />
    <path d="M581 810l8-4" stroke="#d9483c" strokeWidth="4" />
    <path d="M598 802l-11 1 3 7z" fill="#d9483c" />
    <path d="M535 835l-9 4.500" stroke="#1f5a2c" strokeWidth="4" />
    <path d="M518 844l12-1-4-7z" fill="#1f5a2c" />
    <g fontSize="12">
      <text x="521" y="764" fill="#2850d0">Z</text>
      <text x="598" y="804" fill="#d9584c">X</text>
      <text x="508" y="851" fill="#2c7038">Y</text>
    </g>
  </svg>
);

const DocTab = ({ name, active }) => (
  <div className={clsx("flex h-full items-center pt-px pl-[4px] text-[12px]", active ? "w-[168px] bg-[#00568c] text-[#d9eefa]" : "w-[169px] text-[#333]")}>
    <Icon size={14} box={28}><Bracket /></Icon>
    <button type="button" className="ml-[4px] whitespace-nowrap">{name}</button>
    <Icon size={9} box={9} className="ml-[8px]" strokeWidth="1.300">
      <path d="M5 .700H.700v7.600h6.600V6M3.500 5l4-4M5 .700h3v3" />
    </Icon>
    {active && (
      <button type="button" aria-label={`Close ${name}`} className="ml-[6px]">
        <Icon size={8} box={8} strokeWidth="1.500"><path d="m1 1 6 6M7 1 1 7" /></Icon>
      </button>
    )}
  </div>
);

const Legend = () => (
  <div className="mt-[48px] flex justify-end gap-[7px]">
    <ul className="flex flex-col text-right">
      {LEGEND.map((label) => (
        <li key={label} className="h-[42px] leading-4">{label}</li>
      ))}
    </ul>
    <div className="mt-[8px] flex h-[504px] w-[24px] flex-col bg-[linear-gradient(#ff1800_0%,#ff8a00_17%,#ffc400_25%,#f4f400_34%,#90e800_42%,#00c800_50%,#00dc90_60%,#00e4ff_68%,#0098ff_76%,#0050ff_90%,#0010ff_100%)]">
      {LEGEND.slice(1).map((label) => (
        <span key={label} className="h-[42px] border-b border-[#a8a8a8]/60 last:border-b-0" />
      ))}
    </div>
  </div>
);

const GraphicsWindow = () => (
  <main className="flex min-w-0 flex-1 flex-col border-r border-[#d0d0d0] bg-white">
    <div className="flex h-[26px] shrink-0 border-b-2 border-[#005a87]">
      <DocTab name="3-007-000409_A.prt" />
      <DocTab name="3-007-000622_A.prt" active />
    </div>
    <div className="relative min-h-0 flex-1 overflow-hidden font-['Liberation_Sans',Arial,sans-serif]">
      <Model />
      <div className="relative pt-[7px] pr-[36px] text-[14px] text-[#4a5070]">
        <div className="text-right leading-4">
          <p>3-007-000622_A</p>
          <p>Structural 01</p>
          <p>Displacement - Y</p>
          <p>Global Min: -1.877E-03, Global Max: 7.289E-03, Units: mm</p>
          <p>Scaled Deformation Display</p>
        </div>
        <Legend />
        <p className="text-right leading-4">[mm]</p>
      </div>
    </div>
  </main>
);

export default function App() {
  const [tab, setTab] = useState("Performance Predictor");
  const [dialogOpen, setDialogOpen] = useState(true);

  return (
    <div className="flex h-screen flex-col overflow-hidden bg-white font-['Open_Sans','Noto_Sans',sans-serif]">
      <Defs />
      <TitleBar active={tab} onSelect={setTab} />
      <Ribbon />
      <SelectionBar />
      <div className="relative flex min-h-0 flex-1">
        <ResourceBar />
        <aside className="flex w-[438px] shrink-0 flex-col border-r-2 border-[#c0c0c0]">
          <Navigator />
        </aside>
        {dialogOpen && <AnimationDialog onClose={() => setDialogOpen(false)} />}
        <GraphicsWindow />
      </div>
      <footer className="flex h-[18px] shrink-0 items-center justify-end border-t border-[#b4b4b4] pr-[48px] text-[12px] text-[#333]">
        <Icon size={14} box={22} className="mr-[3px] text-[#444]" strokeWidth="1.600">
          <path d="M2 17.500c3-2 3-5 3-8 0-9 12-9 12 0 0 3 0 6 3 8zM9 18c0 3 4 3 4 0" />
        </Icon>
        1 Notification
      </footer>
    </div>
  );
}
